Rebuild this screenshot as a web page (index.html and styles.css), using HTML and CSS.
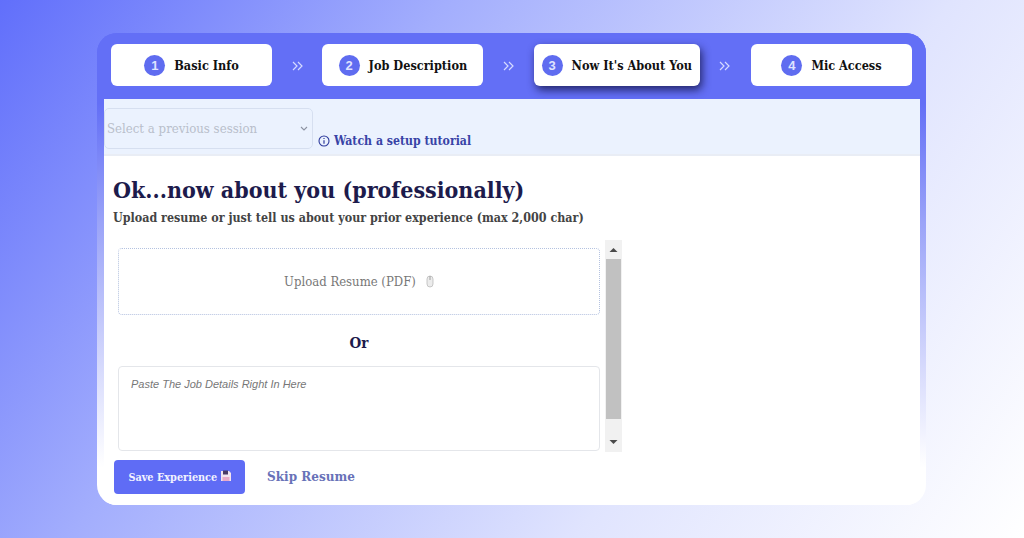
FILE: index.html
```html
<!DOCTYPE html>
<html lang="en">
<head>
  <meta charset="UTF-8">
  <meta name="viewport" content="width=device-width, initial-scale=1.0">
  <title>Now It's About You</title>
  <link rel="stylesheet" href="styles.css">
</head>
<body>
  <div class="card">
    <div class="steps">
      <div class="step"><span class="step-num">1</span>Basic Info</div>
      <svg class="step-arrow" width="11" height="10" viewBox="0 0 11 10"><path d="M1 1l4 4-4 4M6 1l4 4-4 4" fill="none" stroke="#d5daff" stroke-width="1.2"/></svg>
      <div class="step"><span class="step-num">2</span>Job Description</div>
      <svg class="step-arrow" width="11" height="10" viewBox="0 0 11 10"><path d="M1 1l4 4-4 4M6 1l4 4-4 4" fill="none" stroke="#d5daff" stroke-width="1.2"/></svg>
      <div class="step step-active"><span class="step-num">3</span>Now It's About You</div>
      <svg class="step-arrow" width="11" height="10" viewBox="0 0 11 10"><path d="M1 1l4 4-4 4M6 1l4 4-4 4" fill="none" stroke="#d5daff" stroke-width="1.2"/></svg>
      <div class="step step-last"><span class="step-num">4</span>Mic Access</div>
    </div>
    <div class="panel">
      <div class="session-bar">
        <div class="session-select">
          <span>Select a previous session</span>
          <svg class="select-caret" width="8" height="5" viewBox="0 0 8 5"><path d="M1 1l3 3 3-3" fill="none" stroke="#8d93a3" stroke-width="1.1"/></svg>
        </div>
        <a class="tutorial-link" href="#">
          <svg width="12" height="12" viewBox="0 0 12 12"><circle cx="6" cy="6" r="5" fill="none" stroke="#2d3a9c" stroke-width="1.1"/><path d="M6 5.2v3.6M6 3v1.1" stroke="#2d3a9c" stroke-width="1.2"/></svg>
          Watch a setup tutorial
        </a>
      </div>
      <div class="content">
        <h1>Ok...now about you (professionally)</h1>
        <p class="subtitle">Upload resume or just tell us about your prior experience (max 2,000 char)</p>
        <div class="scroll-area">
          <div class="scroll-content">
            <div class="upload-box">
              Upload Resume (PDF)
              <svg width="8" height="13" viewBox="0 0 8 13"><rect x="1" y="1" width="6" height="11" rx="3" fill="#ececec" stroke="#bbb" stroke-width=".8"/><path d="M4 1v4" stroke="#999" stroke-width=".9"/></svg>
            </div>
            <div class="or-label">Or</div>
            <div class="details-box">Paste The Job Details Right In Here</div>
          </div>
          <div class="scrollbar">
            <svg class="scroll-btn" width="17" height="19" viewBox="0 0 17 19"><path d="M4.5 12l4-4 4 4z" fill="#4a4a4a"/></svg>
            <div class="scroll-thumb"></div>
            <svg class="scroll-btn scroll-btn-down" width="17" height="19" viewBox="0 0 17 19"><path d="M4.5 7l4 4 4-4z" fill="#4a4a4a"/></svg>
          </div>
        </div>
        <div class="actions">
          <button class="save-btn">Save Experience
            <svg width="10" height="11" viewBox="0 0 10 11"><path d="M0 1h8l2 2v8H0z" fill="#f3e3ee"/><rect x="2" y="0.5" width="5" height="4" fill="#4a3a66"/><rect x="1.5" y="7" width="7" height="4" fill="#e9a9c8"/></svg>
          </button>
          <a class="skip-link" href="#">Skip Resume</a>
        </div>
      </div>
    </div>
  </div>
</body>
</html>
```

FILE: styles.css
```css
* {
  box-sizing: border-box;
}
body {
  margin: 0;
  height: 538px;
  overflow: hidden;
  padding: 33px 98px 33px 97px;
  font-family: 'DejaVu Serif Condensed', 'Liberation Serif', serif;
  background: linear-gradient(125deg, #616ffb 0%, #a3aefd 32%, #e0e4fe 68%, #ffffff 100%);
}
.card {
  height: 472px;
  border-radius: 20px;
  overflow: hidden;
  padding: 0 6px 10px 7px;
  background: linear-gradient(180deg, #636ff6 0%, #636ff6 15%, #9aa3f8 40%, #ffffff 92%);
  display: flex;
  flex-direction: column;
}
.steps {
  height: 66px;
  flex: none;
  margin: 0 -6px 0 -7px;
  padding: 11px 14px 13px;
  background: #636ff6;
  display: flex;
  align-items: stretch;
}
.step {
  width: 161px;
  background: #fff;
  border-radius: 6px;
  color: #111;
  font-size: 12.6px;
  font-weight: bold;
  display: flex;
  align-items: center;
  justify-content: center;
  gap: 9px;
  white-space: nowrap;
}
.step-active {
  width: 166px;
  box-shadow: 2px 4px 9px rgba(20,20,70,0.8);
}
.step-last {
  margin-left: auto;
}
.step-num {
  width: 21px;
  height: 21px;
  border-radius: 50%;
  background: #5f6cf0;
  color: #dfe3ff;
  font-family: 'Liberation Sans', sans-serif;
  font-size: 13px;
  display: flex;
  align-items: center;
  justify-content: center;
}
.step-arrow {
  align-self: center;
  flex: none;
  margin: 1px 19.7px 0;
}
.panel {
  flex: 1;
  margin-bottom: -10px;
  background: #fff;
}
.session-bar {
  height: 57px;
  background: #ebf2fe;
  border-bottom: 2px solid #e9edf5;
  padding-top: 9px;
  display: flex;
  align-items: flex-start;
  gap: 5px;
}
.session-select {
  width: 209px;
  height: 41px;
  border: 1px solid #d6dff0;
  border-radius: 5px;
  padding: 0 4px 0 2px;
  color: #b9bfcb;
  font-size: 13.1px;
  display: flex;
  align-items: center;
  justify-content: space-between;
}
.tutorial-link {
  margin-top: 26px;
  color: #3843a6;
  font-size: 12.2px;
  font-weight: bold;
  text-decoration: none;
  display: flex;
  align-items: center;
  gap: 4px;
}
.content {
  padding: 17px 0 0 9px;
}
h1 {
  margin: 0;
  color: #1d1b4c;
  font-size: 23px;
  line-height: 34px;
}
.subtitle {
  margin: 1px 0 0;
  color: #444;
  font-size: 12.4px;
  line-height: 20px;
  font-weight: bold;
}
.scroll-area {
  width: 509px;
  height: 212px;
  margin-top: 12px;
  display: flex;
  justify-content: space-between;
}
.scroll-content {
  width: 482px;
  margin-left: 5px;
  padding-top: 8px;
}
.upload-box {
  height: 67px;
  border: 1px dotted #b4c2e0;
  border-radius: 4px;
  color: #777;
  font-size: 13px;
  display: flex;
  align-items: center;
  justify-content: center;
  gap: 10px;
}
.or-label {
  height: 51px;
  color: #1d1b4c;
  font-size: 15px;
  font-weight: bold;
  line-height: 57px;
  text-align: center;
}
.details-box {
  height: 85px;
  border: 1px solid #e4e6ea;
  border-radius: 4px;
  padding: 11px 12px;
  color: #777;
  font-family: 'Liberation Sans', sans-serif;
  font-size: 11px;
  font-style: italic;
}
.scrollbar {
  width: 17px;
  background: #f1f1f1;
  display: flex;
  flex-direction: column;
}
.scroll-btn {
  flex: none;
}
.scroll-btn-down {
  margin-top: auto;
}
.scroll-thumb {
  height: 160px;
  margin: 0 1px;
  background: #c1c1c1;
}
.actions {
  margin-top: 8px;
  display: flex;
  align-items: center;
  gap: 22px;
}
.save-btn {
  width: 131px;
  height: 34px;
  margin-left: 1px;
  border: none;
  border-radius: 4px;
  background: #5f6cf5;
  color: #f2f3ff;
  font-family: 'DejaVu Serif Condensed', 'Liberation Serif', serif;
  font-size: 10.8px;
  font-weight: bold;
  cursor: pointer;
}
.skip-link {
  margin-top: -2px;
  color: #6872b8;
  font-size: 13.4px;
  font-weight: bold;
  text-decoration: none;
}
```
